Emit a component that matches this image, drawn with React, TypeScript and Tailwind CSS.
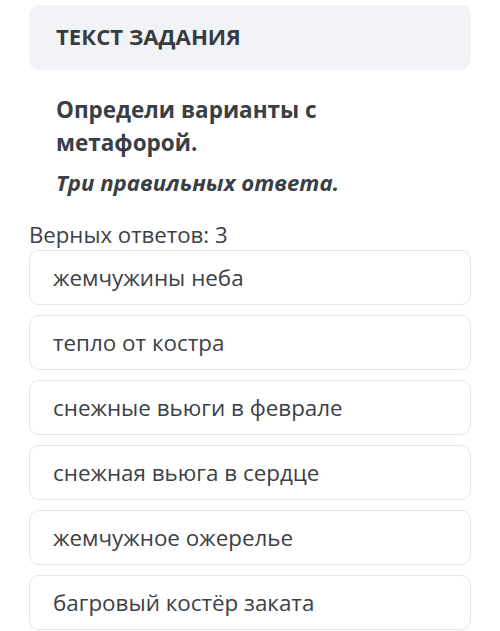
import React from 'react';

const options = [
  'жемчужины неба',
  'тепло от костра',
  'снежные вьюги в феврале',
  'снежная вьюга в сердце',
  'жемчужное ожерелье',
  'багровый костёр заката',
];

export default function App() {
  return (
    <div
      className="w-[500px] h-[631px] overflow-hidden bg-white px-[29px] pt-[5px] text-[#3c4047]"
      style={{ fontFamily: '"Open Sans", sans-serif' }}
    >
      <div className="h-[65px] rounded-[10px] bg-[#f2f3f7] flex items-center px-[27px]">
        <h2 className="text-[22.2px] font-bold text-[#373b42] leading-none">ТЕКСТ ЗАДАНИЯ</h2>
      </div>

      <div className="px-[27px] pt-[23px]">
        <p className="text-[22.5px] font-bold leading-[33px] text-[#3a3e45]">
          Определи варианты с
          <br />
          метафорой.
        </p>
        <p className="mt-[9px] text-[22.2px] font-bold italic leading-[30px] text-[#3a3e45]">
          Три правильных ответа.
        </p>
      </div>

      <div className="mt-[23px] text-[22.2px] leading-[28px]">Верных ответов: 3</div>

      <div className="mt-px flex flex-col gap-[10px]">
        {options.map((o) => (
          <div
            key={o}
            className="h-[55px] rounded-[10px] border border-[#e4e6ea] flex items-center px-[23px] text-[22.4px]"
          >
            {o}
          </div>
        ))}
      </div>
    </div>
  );
}
